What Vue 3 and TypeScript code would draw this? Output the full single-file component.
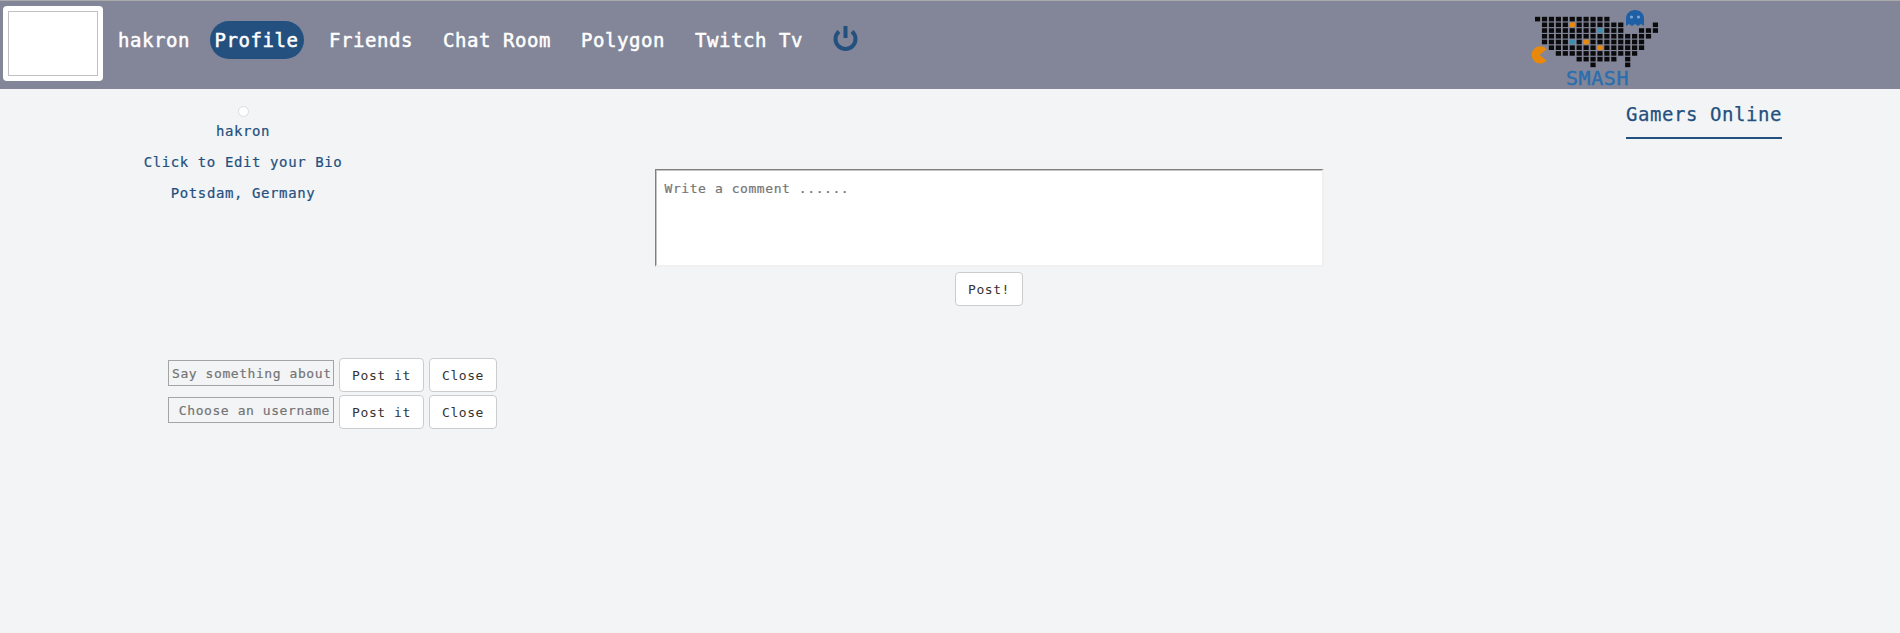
<script setup lang="ts">
const links = ['Friends', 'Chat Room', 'Polygon', 'Twitch Tv']

type Dot = { x: number; y: number; fill: string }
const spans: [number, number][][] = [
  [[0, 10]],
  [[1, 12], [17, 17]],
  [[1, 12], [15, 17]],
  [[1, 16]],
  [[1, 15]],
  [[2, 15]],
  [[3, 14]],
  [[6, 11], [13, 13]],
  [[8, 8], [13, 13]],
]
const accents: Record<string, string> = {
  '1:5': '#e8890c',
  '2:9': '#3b8fb0',
  '4:5': '#3b8fb0',
  '4:7': '#e8890c',
  '5:9': '#e8890c',
}
const dots: Dot[] = []
spans.forEach((row, r) => {
  row.forEach(([a, b]) => {
    for (let c = a; c <= b; c++) {
      dots.push({ x: c * 6.93, y: r * 5.72, fill: accents[`${r}:${c}`] ?? '#0b0b0d' })
    }
  })
})
</script>

<template>
  <div class="page">
    <header class="topbar">
      <div class="brand"><div class="brand-inner"></div></div>
      <nav class="nav">
        <span class="user">hakron</span>
        <a class="link active">Profile</a>
        <a v-for="l in links" :key="l" class="link">{{ l }}</a>
        <svg class="power" width="25" height="25" viewBox="0 0 25 25" fill="none" stroke="#24507f" stroke-width="4">
          <path d="M6 5.400A10 10 0 1 0 19 5.400" />
          <path d="M12.500 0V12" />
        </svg>
      </nav>
      <svg class="logo" width="150" height="88" viewBox="0 0 150 88">
        <rect v-for="(d, i) in dots" :key="i" :x="d.x + 13" :y="d.y + 15.800" width="5.200" height="4.600" :fill="d.fill" />
        <path d="M24.700 48.300A8.600 8.600 0 1 0 24.700 59.500L17.500 54Z" fill="#e8890c" />
        <path d="M104 25V17.500C104 12.500 108 9 113 9S122 12.500 122 17.500V25L119 23L116 25L113 23L110 25L107 23Z" fill="#1f5fa5" />
        <circle cx="109.500" cy="16" r="1.600" fill="#7fa6cf" />
        <circle cx="116.500" cy="16" r="1.600" fill="#7fa6cf" />
        <text class="smash" x="44" y="83.500">SMASH</text>
      </svg>
    </header>

    <main class="columns">
      <section class="left">
        <div class="profile">
          <div class="avatar"></div>
          <p class="name">hakron</p>
          <p>Click to Edit your Bio</p>
          <p>Potsdam, Germany</p>
        </div>
        <form class="mini-form" @submit.prevent>
          <input class="mini-input" placeholder="Say something about" />
          <button class="btn post-it">Post it</button>
          <button class="btn close">Close</button>
        </form>
        <form class="mini-form" @submit.prevent>
          <input class="mini-input" placeholder="Choose an username" />
          <button class="btn post-it">Post it</button>
          <button class="btn close">Close</button>
        </form>
      </section>

      <section class="center">
        <textarea class="comment" placeholder="Write a comment ......"></textarea>
        <button class="btn post">Post!</button>
      </section>

      <aside class="right">
        <h2 class="online">Gamers Online</h2>
      </aside>
    </main>
  </div>
</template>

<style>
html, body { margin: 0; background: #f3f4f6; }
</style>

<style scoped>
.page {
  min-height: 633px;
  background: #f3f4f6;
  font-family: "DejaVu Sans Mono", "Liberation Mono", monospace;
  color: #24507f;
  overflow: hidden;
}
.topbar {
  position: relative;
  display: flex;
  align-items: flex-start;
  height: 88px;
  background: #828698;
  border-top: 1px solid #aaaaaa;
  box-sizing: content-box;
}
.brand {
  box-sizing: border-box;
  width: 100px;
  height: 75px;
  margin: 5px 0 0 3px;
  padding: 5px;
  background: #fff;
  border-radius: 4px;
}
.brand-inner {
  box-sizing: border-box;
  width: 90px;
  height: 65px;
  border: 1px solid #c0c0c0;
}
.nav {
  display: flex;
  align-items: center;
  height: 38px;
  margin: 20px 0 0 15px;
  gap: 19px;
  font-size: 19px;
  letter-spacing: 0.56px;
  -webkit-text-stroke: 0.5px #fff;
  color: #fff;
}
.user { display: block; }
.link {
  display: flex;
  align-items: center;
  height: 38px;
  padding: 0 5.5px;
  border-radius: 19px;
  cursor: pointer;
}
.active { background: #24507f; margin: 0 1px 0 0.5px; padding: 0 5px; }
.power { margin: -4px 0 0 5px; flex: none; }
.logo {
  position: absolute;
  left: 1522px;
  top: 0;
}
.smash {
  font-family: "DejaVu Sans Mono", monospace;
  font-size: 20px;
  letter-spacing: 0.56px;
  fill: #2a6eb0;
  stroke: #2a6eb0;
  stroke-width: 0.4px;
}
.columns {
  display: grid;
  grid-template-columns: 486px 1006px 1fr;
}
.left { display: flex; flex-direction: column; min-width: 0; }
.profile {
  height: 269px;
  padding-top: 17px;
  box-sizing: border-box;
  text-align: center;
  font-size: 14px;
  letter-spacing: 0.6px;
  -webkit-text-stroke: 0.2px #24507f;
}
.profile p {
  margin: 0;
  height: 31px;
  line-height: 31px;
}
.avatar {
  box-sizing: border-box;
  width: 11px;
  height: 11px;
  margin: 0 auto 8px;
  background: #fff;
  border: 1px solid #dcdcdc;
  border-radius: 50%;
}
.profile .name { height: 22px; line-height: 13px; }
.mini-form {
  display: flex;
  align-items: center;
  gap: 5px;
  width: 340px;
  margin-left: 168px;
  height: 34px;
  margin-bottom: 3px;
}
.mini-input {
  flex: none;
  box-sizing: border-box;
  width: 166px;
  height: 26px;
  margin: -4px 0 0;
  padding: 0 3px;
  border: 1px solid #a4a4a4;
  background: transparent;
  font: inherit;
  font-size: 13px;
  letter-spacing: 0.57px;
  -webkit-text-stroke: 0.2px #757575;
  text-align: right;
  outline: none;
}
.mini-input::placeholder { color: #757575; opacity: 1; }
.btn {
  flex: none;
  box-sizing: border-box;
  height: 34px;
  padding: 0;
  background: #fff;
  border: 1px solid #cccccc;
  border-radius: 4px;
  color: #333;
  font: inherit;
  font-size: 13px;
  letter-spacing: 0.57px;
  cursor: pointer;
}
.post-it { width: 85px; }
.close { width: 68px; }
.center {
  display: flex;
  flex-direction: column;
  align-items: center;
  padding-top: 80px;
}
.comment {
  box-sizing: border-box;
  display: block;
  width: 669px;
  height: 98px;
  padding: 11px 9px;
  border-width: 1px 2px 2px 1px;
  border-style: solid;
  border-color: #808080 #f0f0f0 #f0f0f0 #808080;
  box-shadow: inset 0 1px #c4c4c4, inset 1px 0 #c4c4c4;
  background: #fff;
  font: inherit;
  font-size: 13px;
  letter-spacing: 0.57px;
  -webkit-text-stroke: 0.2px #757575;
  resize: none;
  outline: none;
}
.comment::placeholder { color: #757575; opacity: 1; }
.post { width: 68px; margin-top: 5px; }
.right { padding: 13px 0 0 134px; }
.online {
  display: inline-block;
  margin: 0;
  padding: 0 0 11px;
  border-bottom: 2px solid #24507f;
  font-size: 19px;
  line-height: 24px;
  letter-spacing: 0.56px;
  font-weight: 400;
  -webkit-text-stroke: 0.25px #24507f;
  white-space: nowrap;
}
</style>
